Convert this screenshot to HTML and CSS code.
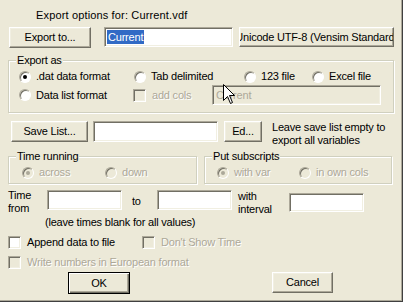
FILE: index.html
```html
<!DOCTYPE html>
<html>
<head>
<meta charset="utf-8">
<link rel="stylesheet" href="styles.css">
</head>
<body>
<div class="dialog">
  <div class="title">Export options for: Current.vdf</div>

  <div class="row r-export">
    <div class="btn b-export">Export to...</div>
    <div class="field f-current"><span class="sel">Current</span></div>
    <div class="btn b-enc"><span>Unicode UTF-8 (Vensim Standard)</span></div>
  </div>

  <div class="group g-export">
    <span class="legend">Export as</span>
    <div class="grow g1">
      <div class="opt w115"><span class="radio on"></span>.dat data format</div>
      <div class="opt w110"><span class="radio"></span>Tab delimited</div>
      <div class="opt w68"><span class="radio"></span>123 file</div>
      <div class="opt"><span class="radio"></span>Excel file</div>
    </div>
    <div class="grow g2">
      <div class="opt w114"><span class="radio"></span>Data list format</div>
      <div class="opt w79 dis"><span class="check"></span>add cols</div>
      <div class="field dfield">Current</div>
    </div>
  </div>

  <div class="row r-save">
    <div class="btn b-save">Save List...</div>
    <div class="field f-save"></div>
    <div class="btn b-ed">Ed...</div>
    <div class="note">Leave save list empty to<br>export all variables</div>
  </div>

  <div class="row r-groups">
    <div class="group g-time">
      <span class="legend">Time running</span>
      <div class="grow">
        <div class="opt w83 dis"><span class="radio on"></span>across</div>
        <div class="opt dis"><span class="radio"></span>down</div>
      </div>
    </div>
    <div class="group g-sub">
      <span class="legend">Put subscripts</span>
      <div class="grow">
        <div class="opt w82 dis"><span class="radio on"></span>with var</div>
        <div class="opt dis"><span class="radio"></span>in own cols</div>
      </div>
    </div>
  </div>

  <div class="row r-time">
    <div class="lbl l-time">Time<br>from</div>
    <div class="field f-t1"></div>
    <div class="lbl l-to">to</div>
    <div class="field f-t2"></div>
    <div class="lbl l-with">with<br>interval</div>
    <div class="field f-t3"></div>
  </div>

  <div class="hint">(leave times blank for all values)</div>

  <div class="row r-append">
    <div class="opt w134"><span class="check"></span>Append data to file</div>
    <div class="opt dis"><span class="check"></span>Don't Show Time</div>
  </div>

  <div class="row r-euro">
    <div class="opt dis"><span class="check"></span>Write numbers in European format</div>
  </div>

  <div class="row r-buttons">
    <div class="btn b-ok">OK</div>
    <div class="btn b-cancel">Cancel</div>
  </div>

  <svg class="cursor" width="13" height="21" viewBox="0 0 13 21">
    <path d="M0.5 0.5 L0.5 16.5 L4.5 12.5 L7.5 19.5 L9.5 18.5 L6.5 11.5 L11.5 11.5 Z" fill="#fff" stroke="#000" stroke-width="1"/>
  </svg>
</div>
</body>
</html>
```

FILE: styles.css
```css
html, body {
  margin: 0;
  padding: 0;
  background: #ECE9D8;
}
.dialog {
  position: relative;
  width: 403px;
  height: 302px;
  box-sizing: border-box;
  background: #ECE9D8;
  box-shadow: inset -1px -1px #404040, inset -2px -2px #ACA899;
  font-family: "Liberation Sans", Arial, sans-serif;
  font-size: 11px;
  line-height: 13px;
  letter-spacing: -0.2px;
  color: #000;
  overflow: hidden;
}
.title {
  margin-top: 9px;
  padding-left: 36px;
  height: 13px;
  letter-spacing: 0.15px;
}
.row {
  display: flex;
  align-items: flex-start;
}
.btn {
  box-sizing: border-box;
  display: flex;
  align-items: center;
  justify-content: center;
  border: 1px solid;
  border-color: #fff #716F64 #716F64 #fff;
  box-shadow: inset -1px -1px #ACA899, inset 1px 1px #F1EFE2;
  background: #ECE9D8;
  white-space: nowrap;
  overflow: hidden;
}
.field {
  box-sizing: border-box;
  border: 1px solid;
  border-color: #ACA899 #fff #fff #ACA899;
  box-shadow: inset 1px 1px #716F64, inset -1px -1px #F1EFE2;
  background: #fff;
  white-space: nowrap;
  overflow: hidden;
}
.r-export { margin-top: 5px; }
.b-export { margin-left: 9px; width: 82px; height: 21px; }
.f-current {
  margin-left: 13px;
  width: 129px;
  height: 20px;
  padding: 2px 0 0 2px;
}
.sel {
  display: inline-block;
  background: #316AC5;
  color: #fff;
  padding: 0 1px;
  height: 14px;
  line-height: 14px;
}
.b-enc { margin-left: 6px; width: 155px; height: 20px; }

.group {
  position: relative;
  box-sizing: border-box;
  border: 1px solid #D0D0BF;
  box-shadow: inset 1px 1px #fff, 1px 1px #fff;
}
.legend {
  position: absolute;
  top: -7px;
  left: 7px;
  padding: 0 1px;
  background: #ECE9D8;
  line-height: 13px;
}
.g-export {
  margin: 12px 0 0 8px;
  width: 386px;
  height: 53px;
  padding: 9px 0 0 10px;
}
.grow {
  display: flex;
  align-items: center;
}
.g1 { height: 13px; }
.g2 { height: 20px; margin-top: 2px; }
.opt {
  display: flex;
  align-items: center;
  height: 13px;
  white-space: nowrap;
}
.w68 { width: 68px; }
.w79 { width: 79px; }
.w82 { width: 82px; }
.w83 { width: 83px; }
.w110 { width: 110px; }
.w114 { width: 114px; }
.w115 { width: 115px; }
.w134 { width: 134px; }
.radio {
  position: relative;
  box-sizing: border-box;
  width: 12px;
  height: 12px;
  margin-right: 5px;
  border-radius: 50%;
  border: 1px solid;
  border-color: #ACA899 #fff #fff #ACA899;
  box-shadow: inset 1px 1px #716F64;
  background: #fff;
  flex: none;
}
.radio.on::after {
  content: "";
  position: absolute;
  left: 3px;
  top: 3px;
  width: 4px;
  height: 4px;
  border-radius: 50%;
  background: #000;
}
.check {
  box-sizing: border-box;
  width: 13px;
  height: 13px;
  margin-right: 6px;
  border: 1px solid;
  border-color: #ACA899 #fff #fff #ACA899;
  box-shadow: inset 1px 1px #716F64, inset -1px -1px #F1EFE2;
  background: #fff;
  flex: none;
}
.dis {
  color: #ACA899;
  text-shadow: 1px 1px #fff;
}
.dis .radio, .dis .check {
  background: #ECE9D8;
}
.dis .radio.on::after {
  background: #ACA899;
}
.dfield {
  width: 169px;
  height: 20px;
  background: #ECE9D8;
  color: #ACA899;
  padding: 3px 0 0 3px;
}

.r-save { margin-top: 8px; }
.b-save { margin-left: 11px; width: 77px; height: 21px; }
.f-save { margin-left: 5px; width: 125px; height: 21px; }
.b-ed { margin-left: 6px; width: 38px; height: 21px; }
.note { margin-left: 10px; }

.r-groups { margin-top: 9px; }
.g-time {
  margin-left: 8px;
  width: 189px;
  height: 28px;
  padding: 9px 0 0 13px;
}
.g-sub {
  margin-left: 7px;
  width: 188px;
  height: 28px;
  padding: 9px 0 0 12px;
}
.g-time .grow, .g-sub .grow { height: 13px; }

.r-time { margin-top: 4px; }
.lbl { white-space: nowrap; }
.l-time { margin-left: 8px; width: 39px; margin-top: 1px; }
.f-t1 { width: 75px; height: 20px; margin-top: 2px; }
.l-to { margin-left: 10px; width: 25px; margin-top: 7px; }
.f-t2 { width: 75px; height: 20px; margin-top: 2px; }
.l-with { margin-left: 6px; width: 51px; margin-top: 2px; }
.f-t3 { width: 75px; height: 19px; margin-top: 5px; }

.hint { margin-top: 0; padding-left: 45px; height: 13px; }

.r-append { margin-top: 7px; padding-left: 8px; }
.r-euro { margin-top: 7px; padding-left: 8px; }

.r-buttons { margin-top: 3px; }
.b-ok {
  margin-left: 68px;
  width: 62px;
  height: 22px;
  border-color: #000;
  box-shadow: inset 1px 1px #fff, inset -1px -1px #716F64, inset -2px -2px #ACA899;
}
.b-cancel { margin-left: 142px; width: 61px; height: 21px; }

.cursor {
  position: absolute;
  left: 223px;
  top: 84px;
}
```
